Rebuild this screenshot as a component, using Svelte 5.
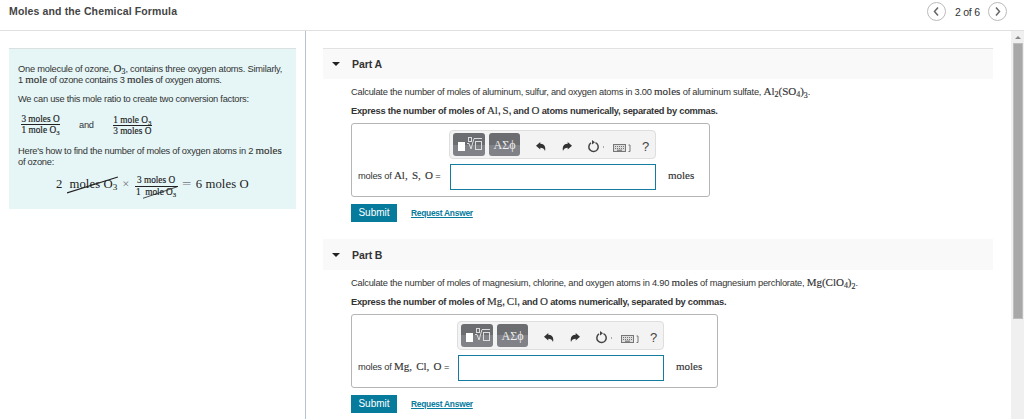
<script lang="ts">
  interface Part {
    id: string
    elements: string[]
    compound: string
    question: string
    amount: string
    name: string
    formula: [string, string, string, string, string]
  }

  const parts: Part[] = [
    {
      id: 'A',
      elements: ['Al', 'S', 'O'],
      compound: 'aluminum sulfate',
      question: 'aluminum, sulfur, and oxygen atoms',
      amount: '3.00',
      name: 'a',
      formula: ['Al', '2', '(SO', '4', '3'],
    },
    {
      id: 'B',
      elements: ['Mg', 'Cl', 'O'],
      compound: 'magnesium perchlorate',
      question: 'magnesium, chlorine, and oxygen atoms',
      amount: '4.90',
      name: 'b',
      formula: ['Mg', '', '(ClO', '4', '2'],
    },
  ]

  let answers = $state(['', ''])
  let page = $state(2)
</script>

{#snippet undo()}
  <svg width="10" height="9" viewBox="0 0 10 9">
    <path d="M0 3.700 4.300 0v1.800C8 1.900 10.100 4 9 9 8.200 6.600 6.700 5.700 4.300 5.700v1.900z" fill="#333" />
  </svg>
{/snippet}

<header class="topbar">
  <h1>Moles and the Chemical Formula</h1>
  <nav>
    <button class="round" aria-label="Previous" onclick={() => page--}>
      <svg width="17" height="17" viewBox="0 0 17 17"><path d="M10 4.500 6.500 8.500l3.500 4" /></svg>
    </button>
    <span class="count">{page} of 6</span>
    <button class="round" aria-label="Next" onclick={() => page++}>
      <svg width="17" height="17" viewBox="0 0 17 17"><path d="M7 4.500l3.500 4L7 12.500" /></svg>
    </button>
  </nav>
</header>

<div class="columns">
  <aside>
    <section class="intro">
      <p class="l1">One molecule of ozone, <span class="m">O<sub>3</sub></span>, contains three oxygen atoms. Similarly,</p>
      <p class="l2">1 <span class="m">mole</span> of ozone contains 3 <span class="m">moles</span> of oxygen atoms.</p>
      <p class="l3">We can use this mole ratio to create two conversion factors:</p>
      <div class="ratios">
        <span class="frac"><span>3 moles O</span><span>1 mole O<sub>3</sub></span></span>
        <span class="and">and</span>
        <span class="frac second"><span>1 mole O<sub>3</sub></span><span>3 moles O</span></span>
      </div>
      <p class="l4">Here's how to find the number of moles of oxygen atoms in 2 <span class="m">moles</span></p>
      <p class="l5">of ozone:</p>
      <div class="equation">
        <span>2</span>
        <span class="struck">moles O<sub>3</sub>
          <svg viewBox="0 0 54 18" preserveAspectRatio="none"><path d="M0 17 53 1" /></svg>
        </span>
        <span class="op">×</span>
        <span class="frac">
          <span>3 moles O</span>
          <span>1 &nbsp;<span class="struck">mole O<sub>3</sub>
            <svg viewBox="0 0 54 18" preserveAspectRatio="none"><path d="M0 17 53 1" /></svg>
          </span></span>
        </span>
        <span class="op eq">=</span>
        <span>6 moles O</span>
      </div>
    </section>
  </aside>

  <main>
    {#each parts as part, i}
      <section class="part part-{part.name}">
        <h2><span class="caret"></span>Part {part.id}</h2>
        <div class="body">
          <p class="question">
            Calculate the number of moles of {part.question} in {part.amount}
            <span class="m">moles</span> of {part.compound},
            <span class="m formula">{part.formula[0]}{#if part.formula[1]}<sub>{part.formula[1]}</sub>{/if}{part.formula[2]}<sub>{part.formula[3]}</sub>)<sub class="low">{part.formula[4]}</sub></span>.
          </p>
          <p class="express">
            Express the number of moles of <span class="m">{part.elements[0]}</span>,
            <span class="m">{part.elements[1]}</span>, and <span class="m">{part.elements[2]}</span> atoms numerically, separated by commas.
          </p>
          <div class="answer">
            <label for="answer-{part.name}">moles of <span class="m list">{part.elements.join(', ')}</span> =</label>
            <div class="entry">
              <div class="toolbar">
                <button class="palette" aria-label="Templates">
                  <svg width="32" height="23" viewBox="0 0 32 23">
                    <rect x="5" y="9" width="7" height="9" fill="#fff" />
                    <g fill="none" stroke="#ddd">
                      <rect x="15.500" y="4.500" width="3" height="4" />
                      <path d="M14 10.500h2l2 5.500 3-10.500h8" />
                      <rect x="22.500" y="8.500" width="6" height="8" />
                    </g>
                  </svg>
                </button>
                <button class="palette greek">ΑΣϕ</button>
                <button class="tool undo" aria-label="Undo">{@render undo()}</button>
                <button class="tool redo" aria-label="Redo">{@render undo()}</button>
                <button class="tool reset" aria-label="Reset">
                  <svg width="17" height="13" viewBox="0 0 17 13">
                    <path d="M4 2.900A4.700 4.700 0 1 0 8.500 2.600" fill="none" stroke="#444" stroke-width="1.500" />
                    <path d="M5 0v4.500L8 2.300z" fill="#444" />
                    <path d="M16.500 6v2" stroke="#aaa" />
                  </svg>
                </button>
                <button class="tool keys" aria-label="Keyboard">
                  <svg width="19" height="9" viewBox="0 0 19 9">
                    <rect x=".5" y=".5" width="12" height="7" fill="#ddd" stroke="#777" />
                    <path d="M2 2.500h9M2 4.500h9" stroke="#777" stroke-dasharray="1 1" />
                    <path d="M4 6.200h5" stroke="#666" />
                    <path d="M15.500 1h1.500v6.500h-1.500" fill="none" stroke="#777" />
                  </svg>
                </button>
                <button class="tool help">?</button>
              </div>
              <input id="answer-{part.name}" bind:value={answers[i]} />
            </div>
            <span class="m unit">moles</span>
          </div>
          <div class="actions">
            <button class="submit">Submit</button>
            <a href="#request-{part.name}">Request Answer</a>
          </div>
        </div>
      </section>
    {/each}
  </main>

  <div class="scrollbar"><span class="up"></span><span class="thumb"></span></div>
</div>

<style>
  :global(body) {
    height: 419px;
    overflow: hidden;
    background: #fff;
    color: #333;
    font-family: 'Liberation Sans', Arial, sans-serif;
    font-size: 9.3px;
    letter-spacing: -0.25px;
  }

  h1,
  h2,
  p {
    margin: 0;
  }

  button {
    padding: 0;
    border: 0;
    background: none;
    font-family: inherit;
  }

  svg {
    display: block;
  }

  sub {
    font-size: 0.72em;
    line-height: 0;
    vertical-align: -0.25em;
  }

  .m,
  .frac,
  .equation {
    font-family: 'Liberation Serif', 'Times New Roman', serif;
    letter-spacing: 0;
  }

  .m {
    font-size: 11px;
    font-weight: 400;
    line-height: 0;
    -webkit-text-stroke: 0.15px;
  }

  .topbar {
    display: flex;
    justify-content: space-between;
    box-sizing: border-box;
    height: 31px;
    padding: 2px 17px 0 9px;
    border-bottom: 1px solid #e0e0e0;
  }

  h1 {
    font-size: 10.5px;
    line-height: 19px;
    letter-spacing: 0.14px;
    color: #444;
  }

  nav {
    display: flex;
    gap: 9px;
  }

  .round {
    box-sizing: border-box;
    width: 19px;
    height: 19px;
    border: 1px solid #bbb;
    border-radius: 50%;
  }

  .round path {
    fill: none;
    stroke: #666;
    stroke-width: 1.5;
  }

  .count {
    width: 24px;
    font-size: 10.5px;
    line-height: 21px;
    white-space: nowrap;
  }

  .columns {
    display: flex;
    height: 388px;
  }

  aside {
    box-sizing: border-box;
    width: 306px;
    padding: 17px 9px 0;
    border-right: 1px solid #b7c3d0;
  }

  .intro {
    box-sizing: border-box;
    height: 161px;
    padding: 14px 9px 0;
    border-top: 1px solid #dadfdf;
    background: #e6f6f7;
    white-space: nowrap;
  }

  .intro p {
    height: 11px;
    line-height: 12px;
  }

  .intro .l1 {
    letter-spacing: -0.23px;
  }

  .intro .l2 {
    letter-spacing: -0.29px;
  }

  .intro .l3 {
    margin-top: 8px;
  }

  .ratios {
    display: flex;
    align-items: center;
    height: 24px;
    margin: 9px 0 8px 3px;
  }

  .ratios .frac {
    margin-top: -2px;
  }

  .ratios .second {
    margin-top: 1px;
  }

  .frac {
    display: inline-flex;
    flex-direction: column;
    width: 39px;
    font-size: 9.3px;
    line-height: 10px;
    text-align: center;
    color: #222;
    -webkit-text-stroke: 0.15px;
  }

  .frac > span + span {
    border-top: 1px solid #222;
  }

  .and {
    margin: 0 19px 0 19px;
  }

  .equation {
    display: flex;
    align-items: center;
    height: 24px;
    margin: 5px 0 0 38px;
    font-size: 12.7px;
    letter-spacing: 0.08px;
    color: #222;
  }

  .equation .frac {
    width: 43px;
    padding-top: 4px;
    letter-spacing: 0;
  }

  .equation .frac > span:first-child {
    line-height: 11px;
  }

  .struck {
    position: relative;
  }

  .equation > .struck {
    margin-left: 7px;
  }

  .struck svg {
    position: absolute;
    inset: -1px -2px -2px -2px;
    width: calc(100% + 4px);
    height: calc(100% + 3px);
  }

  .struck path {
    fill: none;
    stroke: #222;
    stroke-width: 1.2;
  }

  .op {
    margin: 0 5px 0 5px;
    color: #777;
  }

  .eq {
    margin: 0 6px 0 5px;
    transform: scaleX(1.3);
  }

  main {
    flex: 1;
    padding: 17px 18px 0 17px;
  }

  .part {
    height: 191px;
  }

  h2 {
    display: flex;
    align-items: center;
    box-sizing: border-box;
    height: 31px;
    border-top: 1px solid #e2e2e2;
    background: #f9f9f9;
    font-size: 10.5px;
    font-weight: 700;
    letter-spacing: -0.1px;
  }

  .part-b h2 {
    padding-bottom: 1px;
    border-top-color: #f9f9f9;
  }

  .caret {
    margin: 0 12px 0 9px;
    border: 4px solid transparent;
    border-top: 4px solid #222;
    border-bottom: 0;
  }

  .body {
    padding-left: 28px;
  }

  .question,
  .express {
    height: 19px;
    line-height: 19px;
    white-space: nowrap;
  }

  .question {
    padding-top: 4px;
    letter-spacing: -0.235px;
  }

  .express {
    font-weight: 700;
    letter-spacing: -0.265px;
  }

  .low {
    vertical-align: -0.4em;
  }

  .answer {
    display: flex;
    box-sizing: border-box;
    width: 359px;
    height: 74px;
    margin-top: 2px;
    padding: 6px 0 0 6px;
    border: 1px solid #b5b5b5;
    border-radius: 3px;
  }

  .part-b .answer {
    width: 367px;
  }

  label {
    width: 91px;
    padding-top: 37px;
    line-height: 18px;
    letter-spacing: -0.2px;
    white-space: nowrap;
  }

  .list {
    word-spacing: 1.5px;
  }

  .part-b label {
    width: 99px;
  }

  .entry {
    width: 207px;
  }

  .toolbar {
    display: flex;
    align-items: center;
    box-sizing: border-box;
    height: 29px;
    padding-left: 3px;
    border: 1px solid #dedede;
    border-radius: 4px;
    background: #f3f3f3;
  }

  .palette {
    width: 32px;
    height: 23px;
    margin-right: 4px;
    border-radius: 3px;
    background: linear-gradient(#6c6d70 50%, #818288 50%);
  }

  .greek {
    width: 31px;
    color: #eee;
    font: 12px/20px 'Liberation Serif', serif;
  }

  .undo {
    margin: 3px 16px 0 12px;
  }

  .redo {
    margin: 3px 15px 0 0;
    transform: scaleX(-1);
  }

  .reset {
    margin: 4px 9px 0 0;
  }

  .keys {
    margin: 7px 10px 0 0;
  }

  .help {
    margin-top: 3px;
    color: #444;
    font-size: 13px;
  }

  input {
    display: block;
    box-sizing: border-box;
    width: 206px;
    height: 26px;
    margin: 5px 0 0 1px;
    padding: 0 6px;
    border: 1px solid #137ca0;
    background: #fff;
    outline: 0;
  }

  .unit {
    margin: 45px 0 0 12px;
  }

  .actions {
    display: flex;
    align-items: center;
    gap: 14px;
    margin-top: 7px;
  }

  .submit {
    width: 46px;
    height: 18px;
    padding-bottom: 2px;
    background: #077b9c;
    color: #fff;
    font-size: 10px;
  }

  .actions a {
    color: #077b9c;
    font-size: 8.4px;
    font-weight: 700;
  }

  .scrollbar {
    display: flex;
    flex-direction: column;
    align-items: center;
    width: 13px;
    background: #f0f0f0;
  }

  .up {
    margin: 5px 0 4px;
    border: 3px solid transparent;
    border-top: 0;
    border-bottom-color: #888;
  }

  .thumb {
    box-sizing: border-box;
    width: 10px;
    height: 276px;
    border: 1px solid #bdbdbd;
    background: #a8a8a8;
  }
</style>
